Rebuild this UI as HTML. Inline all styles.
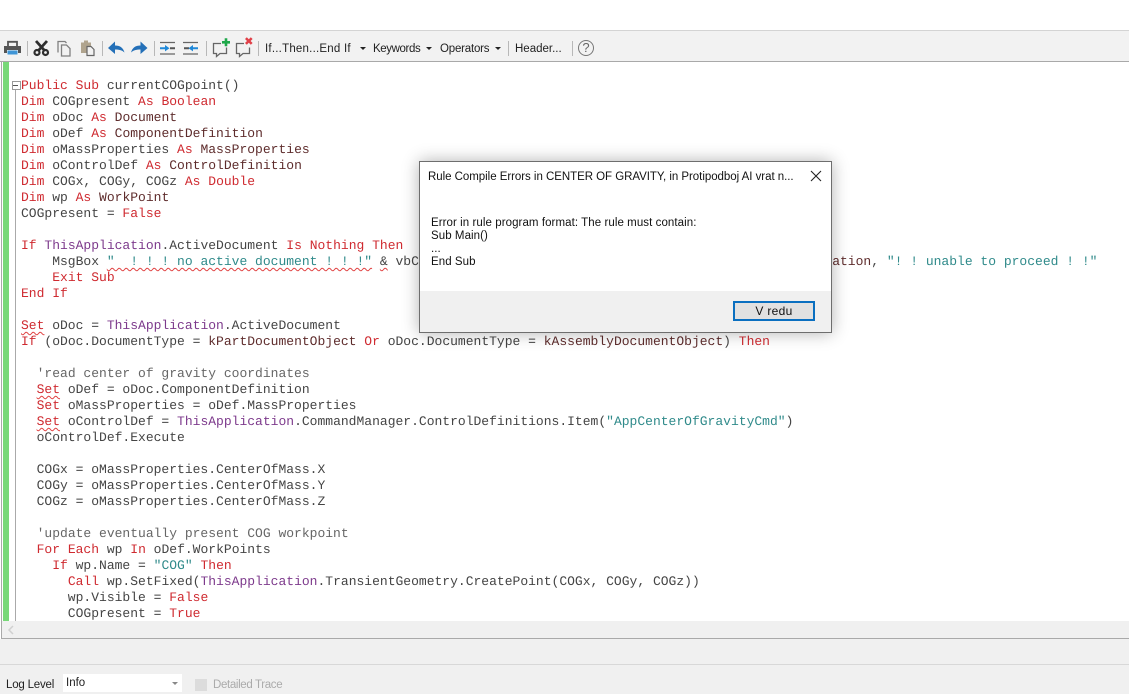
<!DOCTYPE html>
<html><head><meta charset="utf-8">
<style>
html,body{margin:0;padding:0;width:1129px;height:694px;overflow:hidden;background:#fff}
#r{position:relative;width:1129px;height:694px;overflow:hidden;background:#fff;font-family:"Liberation Sans",sans-serif}
.a{position:absolute}
.l{position:absolute;left:21px;margin-top:1px;font:13px/16px "Liberation Mono",monospace;white-space:pre;color:#444;text-rendering:geometricPrecision;height:16px}
.l b{font-weight:normal;color:#cf2a30}
.l i{font-style:normal;color:#7d3a8c}
.l s{text-decoration:none;color:#2f8a8a}
.l u{text-decoration:underline wavy #e04040 1px;text-underline-offset:2px}
.l em{font-style:normal;color:#5e2c2c}
.t{position:absolute;top:42px;font-size:11.5px;line-height:14px;color:#222;white-space:pre}
.sep{position:absolute;top:41px;width:1px;height:15px;background:#b8b8b8}
.car{position:absolute;top:47px;width:0;height:0;border-left:3px solid transparent;border-right:3px solid transparent;border-top:3px solid #222}
.d{position:absolute;left:431px;font-size:11.5px;line-height:13px;color:#111;white-space:pre;letter-spacing:.07px}
</style></head><body><div id="r">
<div class="a" style="left:0;top:30px;width:1129px;height:1px;background:#d4d4d4"></div>
<div class="a" style="left:0;top:31px;width:1129px;height:30px;background:#f2f2f2"></div>
<div class="a" style="left:0;top:61px;width:1129px;height:1px;background:#a9a9a9"></div>

<svg class="a" style="left:0;top:34px" width="260" height="28" viewBox="0 0 260 28">
<!-- printer -->
<path d="M8 12V7.800h9V12" fill="none" stroke="#555" stroke-width="1.800"/>
<path d="M4 12h17v7h-3v-3H7v3H4z" fill="#555"/>
<rect x="7.500" y="16.500" width="10" height="4" fill="#3f95d6"/>
<!-- scissors -->
<g fill="none" stroke="#2e2e2e"><path d="M36 7l9 10M47 7l-9 10" stroke-width="2.800"/><circle cx="37" cy="18.500" r="2.500" stroke-width="2.200"/><circle cx="45.500" cy="18.500" r="2.500" stroke-width="2.200"/></g>
<!-- copy -->
<g fill="none" stroke="#808080" stroke-width="1.300"><path d="M58 18.500V7.500h7l1.500 1.500"/><path d="M61.500 11h5l3.500 3.500v7.500h-8.500z"/></g>
<!-- paste -->
<path d="M81 8.500h3V6.500h4v2h3V12h-4v7h-6z" fill="#b0a48e"/>
<path d="M87 12.500h4l3 3v6h-7z" fill="#f2f2f2" stroke="#666" stroke-width="1.200"/>
<!-- undo / redo -->
<path d="M108 14l7-6.500v4c5 0 8 2 9.500 7-2.500-2.300-5.500-3-9.500-3v4.500z" fill="#2470b8"/>
<path d="M147.500 14l-7-6.500v4c-5 0-8 2-9.500 7 2.500-2.300 5.500-3 9.500-3v4.500z" fill="#2470b8"/>
<!-- indent / outdent -->
<g stroke="#666" stroke-width="1.300" fill="none"><path d="M160 8.500h15M160 20h15M183 8.500h15M183 20h15"/></g>
<g stroke="#555" stroke-width="2" fill="none"><path d="M170 14.200h5M184 14.200h5"/></g>
<path d="M160 13.300h5V11l4.500 3.200-4.500 3.200V15.200h-5z" fill="#1f88d8"/>
<path d="M198 13.300h-5V11l-4.500 3.200 4.500 3.200V15.200h5z" fill="#1f88d8"/>
<!-- comments -->
<g fill="none" stroke="#666" stroke-width="1.300"><path d="M221 9.500h-7.500v10h3v3l3.500-3h6.500v-6"/><path d="M244 9.500h-7.500v10h3v3l3.500-3h6.500v-6"/></g>
<path d="M222 7h2.700V4.300h2.600V7H230v2.600h-2.700v2.700h-2.600V9.600H222z" fill="#1fa84a"/>
<path d="M245 5l1.800-1.800 2 2 2-2L252.600 5l-2 2 2 2-1.800 1.800-2-2-2 2L245 9l2-2z" fill="#e04048"/>
</svg>
<div class="sep" style="left:27px"></div>
<div class="sep" style="left:102px"></div>
<div class="sep" style="left:154px"></div>
<div class="sep" style="left:206px"></div>
<div class="sep" style="left:258px"></div>
<div class="sep" style="left:508px"></div>
<div class="sep" style="left:572px"></div>
<div class="t" style="left:265px;letter-spacing:.22px">If...Then...End If</div><div class="car" style="left:360px"></div>
<div class="t" style="left:373px;letter-spacing:-.4px">Keywords</div><div class="car" style="left:426px"></div>
<div class="t" style="left:440px;letter-spacing:-.2px">Operators</div><div class="car" style="left:495px"></div>
<div class="t" style="left:515px">Header...</div>
<div class="a" style="left:578px;top:40px;width:14px;height:14px;border:1.500px solid #777;border-radius:50%;text-align:center;font-size:13px;line-height:14px;color:#666">?</div>

<div class="a" style="left:1px;top:62px;width:1px;height:577px;background:#a9a9a9"></div>
<div class="a" style="left:3px;top:62px;width:6px;height:559px;background:#78d878"></div>
<div class="a" style="left:15px;top:90px;width:1px;height:531px;background:#aaa"></div>
<div class="a" style="left:11.500px;top:81px;width:7px;height:7px;border:1px solid #999;background:#fff"></div>
<div class="a" style="left:13px;top:85px;width:5px;height:1px;background:#555"></div>

<div class="l" style="top:77px"><b>Public</b> <b>Sub</b> currentCOGpoint()</div>
<div class="l" style="top:93px"><b>Dim</b> COGpresent <b>As</b> <b>Boolean</b></div>
<div class="l" style="top:109px"><b>Dim</b> oDoc <b>As</b> <em>Document</em></div>
<div class="l" style="top:125px"><b>Dim</b> oDef <b>As</b> <em>ComponentDefinition</em></div>
<div class="l" style="top:141px"><b>Dim</b> oMassProperties <b>As</b> <em>MassProperties</em></div>
<div class="l" style="top:157px"><b>Dim</b> oControlDef <b>As</b> <em>ControlDefinition</em></div>
<div class="l" style="top:173px"><b>Dim</b> COGx, COGy, COGz <b>As</b> <b>Double</b></div>
<div class="l" style="top:189px"><b>Dim</b> wp <b>As</b> <em>WorkPoint</em></div>
<div class="l" style="top:205px">COGpresent = <b>False</b></div>
<div class="l" style="top:237px"><b>If</b> <i>ThisApplication</i>.ActiveDocument <b>Is</b> <b>Nothing</b> <b>Then</b></div>
<div class="l" style="top:253px">    MsgBox <u><s>"  ! ! ! no active document ! ! !"</s></u> <u>&amp;</u> vbCrLf</div>
<div class="l" style="top:253px;left:832.200px"><em>ation</em>, <s>"! ! unable to proceed ! !"</s></div>
<div class="l" style="top:269px">    <b>Exit</b> <b>Sub</b></div>
<div class="l" style="top:285px"><b>End</b> <b>If</b></div>
<div class="l" style="top:317px"><u><b>Set</b></u> oDoc = <i>ThisApplication</i>.ActiveDocument</div>
<div class="l" style="top:333px"><b>If</b> (oDoc.DocumentType = <em>kPartDocumentObject</em> <b>Or</b> oDoc.DocumentType = <em>kAssemblyDocumentObject</em>) <b>Then</b></div>
<div class="l" style="top:365px">  <span style="color:#666">'read center of gravity coordinates</span></div>
<div class="l" style="top:381px">  <u><b>Set</b></u> oDef = oDoc.ComponentDefinition</div>
<div class="l" style="top:397px">  <b>Set</b> oMassProperties = oDef.MassProperties</div>
<div class="l" style="top:413px">  <u><b>Set</b></u> oControlDef = <i>ThisApplication</i>.CommandManager.ControlDefinitions.Item(<s>"AppCenterOfGravityCmd"</s>)</div>
<div class="l" style="top:429px">  oControlDef.Execute</div>
<div class="l" style="top:461px">  COGx = oMassProperties.CenterOfMass.X</div>
<div class="l" style="top:477px">  COGy = oMassProperties.CenterOfMass.Y</div>
<div class="l" style="top:493px">  COGz = oMassProperties.CenterOfMass.Z</div>
<div class="l" style="top:525px">  <span style="color:#666">'update eventually present COG workpoint</span></div>
<div class="l" style="top:541px">  <b>For</b> <b>Each</b> wp <b>In</b> oDef.WorkPoints</div>
<div class="l" style="top:557px">    <b>If</b> wp.Name = <s>"COG"</s> <b>Then</b></div>
<div class="l" style="top:573px">      <b>Call</b> wp.SetFixed(<i>ThisApplication</i>.TransientGeometry.CreatePoint(COGx, COGy, COGz))</div>
<div class="l" style="top:589px">      wp.Visible = <b>False</b></div>
<div class="l" style="top:605px;height:15px;overflow:hidden">      COGpresent = <b>True</b></div>

<div class="a" style="left:2px;top:621px;width:1127px;height:17px;background:#f0f0f0"></div>
<div class="a" style="left:1px;top:638px;width:1128px;height:1px;background:#a9a9a9"></div>
<svg class="a" style="left:7px;top:625px" width="8" height="10"><path d="M6 1L2 5l4 4" fill="none" stroke="#d0d0d0" stroke-width="1.500"/></svg>
<div class="a" style="left:0;top:639px;width:1129px;height:25px;background:#f0f0f0"></div>
<div class="a" style="left:0;top:664px;width:1129px;height:1px;background:#d8d8d8"></div>
<div class="a" style="left:0;top:665px;width:1129px;height:29px;background:#f0f0f0"></div>
<div class="a" style="left:6px;top:678px;font-size:11.500px;letter-spacing:-.2px;line-height:14px;color:#222">Log Level</div>
<div class="a" style="left:63px;top:674px;width:119px;height:18px;background:#fff"></div>
<div class="a" style="left:66px;top:676px;font-size:11.500px;line-height:14px;color:#222">Info</div>
<div class="a" style="left:172px;top:682px;width:0;height:0;border-left:3.500px solid transparent;border-right:3.500px solid transparent;border-top:3.500px solid #888"></div>
<div class="a" style="left:195px;top:679px;width:12px;height:12px;background:#dcdcdc"></div>
<div class="a" style="left:213px;top:678px;font-size:11.500px;letter-spacing:-.35px;line-height:14px;color:#ababab">Detailed Trace</div>

<div class="a" style="left:419px;top:161px;width:411px;height:170px;background:#fff;border:1px solid #6e6e6e;box-shadow:0 0 16px rgba(0,0,0,.3)">
<div class="a" style="left:0;top:129px;width:411px;height:41px;background:#f0f0f0"></div>
</div>
<div class="a" style="left:428px;top:170px;font-size:11.500px;letter-spacing:-.04px;line-height:15px;color:#111;white-space:pre">Rule Compile Errors in CENTER OF GRAVITY, in Protipodboj AI vrat n...</div>
<svg class="a" style="left:810px;top:170px" width="12" height="12"><path d="M1 1l10 10M11 1L1 11" stroke="#222" stroke-width="1.100" fill="none"/></svg>
<div class="d" style="top:217px">Error in rule program format: The rule must contain:</div>
<div class="d" style="top:230px">Sub Main()</div>
<div class="d" style="top:243px">...</div>
<div class="d" style="top:256px">End Sub</div>
<div class="a" style="left:733px;top:301px;width:78px;height:16px;border:2px solid #0a6fc0;background:#e1e1e1;font-size:12px;letter-spacing:.3px;line-height:17px;text-align:center;color:#111">V redu</div>
</div></body></html>
